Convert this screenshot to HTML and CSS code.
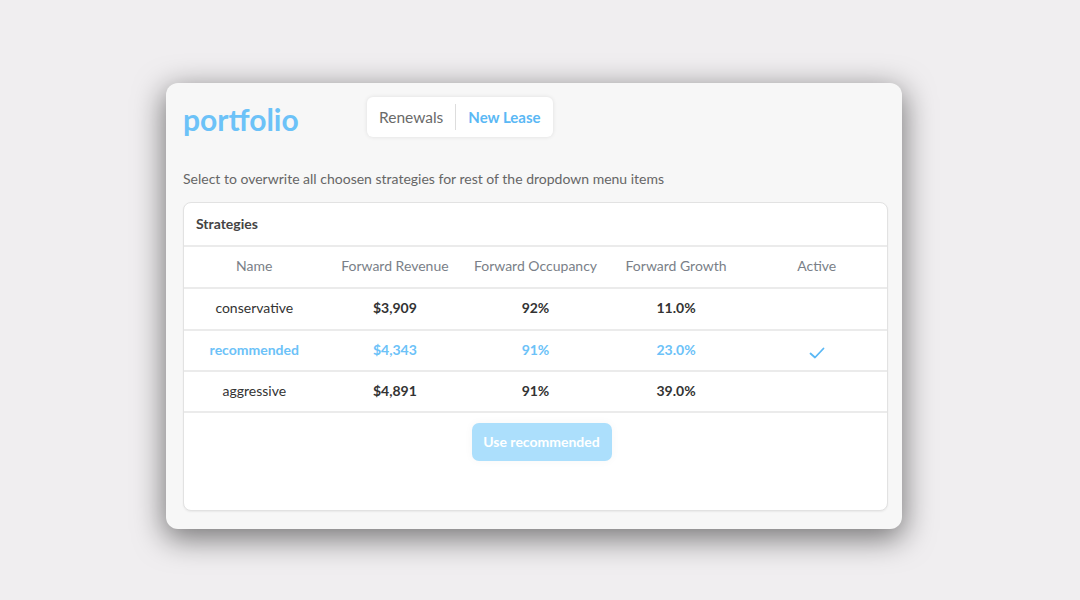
FILE: index.html
```html
<!DOCTYPE html>
<html lang="en">
<head>
    <meta charset="UTF-8">
    <title>portfolio - strategies</title>
    <link rel="stylesheet" href="styles.css">
</head>
<body>
    <div class="panel">
        <div class="top">
            <div class="brand">portfolio</div>
            <div class="tabs">
                <div class="tab">Renewals</div>
                <div class="tab active">New Lease</div>
            </div>
        </div>
        <div class="hint">Select to overwrite all choosen strategies for rest of the dropdown menu items</div>

        <div class="card">
            <div class="card-title">Strategies</div>
            <table>
                <thead>
                <tr>
                    <td>Name</td>
                    <td>Forward Revenue</td>
                    <td>Forward Occupancy</td>
                    <td>Forward Growth</td>
                    <td>Active</td>
                </tr>
                </thead>
                <tbody>
                <tr>
                    <td class="name">conservative</td>
                    <td>$3,909</td>
                    <td>92%</td>
                    <td>11.0%</td>
                    <td></td>
                </tr>
                <tr class="selected">
                    <td class="name">recommended</td>
                    <td>$4,343</td>
                    <td>91%</td>
                    <td>23.0%</td>
                    <td>
                        <svg class="check" width="16" height="12" viewBox="0 0 16 12">
                            <path d="M1.5 6.5 L6 10.5 L14.5 1.5" fill="none" stroke="#5ab8f5" stroke-width="1.8" stroke-linecap="round" stroke-linejoin="round"/>
                        </svg>
                    </td>
                </tr>
                <tr>
                    <td class="name">aggressive</td>
                    <td>$4,891</td>
                    <td>91%</td>
                    <td>39.0%</td>
                    <td></td>
                </tr>
                </tbody>
            </table>
            <div class="actions">
                <div class="btn">Use recommended</div>
            </div>
        </div>
    </div>
</body>
</html>
```

FILE: styles.css
```css
html, body {
    margin: 0;
    padding: 0;
}
body {
    background-color: #f0eef0;
    font-family: Lato, "Liberation Sans", sans-serif;
    color: #333333;
    padding: 83px 0 0 166px;
    min-height: 600px;
    box-sizing: border-box;
}

.panel {
    width: 736px;
    height: 446px;
    box-sizing: border-box;
    background-color: #f7f7f7;
    border-radius: 12px;
    box-shadow: 0 8px 30px 2px rgba(0,0,0,.5);
    padding: 13px 14px 0 17px;
}

.top {
    display: flex;
    align-items: center;
    height: 42px;
}
.brand {
    font-size: 30px;
    font-weight: 700;
    color: #6cc2f8;
    width: 184px;
    padding-top: 3px;
}
.tabs {
    display: flex;
    align-items: center;
    background-color: #ffffff;
    border-radius: 6px;
    box-shadow: 0 0 4px rgba(0,0,0,.1);
    height: 40px;
    padding: 0 12px;
}
.tab {
    font-size: 15.5px;
    color: #6a6a6a;
    padding: 0 12px 0 0;
    height: 26px;
    line-height: 26px;
}
.tab.active {
    color: #5ab8f5;
    font-weight: 700;
    font-size: 15px;
    border-left: 1px solid #dddddd;
    padding: 0 0 0 12px;
}

.hint {
    margin-top: 33px;
    font-size: 14px;
    color: #666666;
    height: 16px;
    line-height: 16px;
}

.card {
    margin-top: 15px;
    background-color: #ffffff;
    border: 1px solid #e2e2e2;
    border-radius: 8px;
    height: 309px;
    box-sizing: border-box;
    overflow: hidden;
    box-shadow: 0 1px 2px rgba(0,0,0,.06);
}
.card-title {
    height: 44px;
    line-height: 42px;
    padding-left: 12px;
    font-size: 14px;
    font-weight: 700;
    color: #444444;
    border-bottom: 2px solid #ebebeb;
    box-sizing: border-box;
}

table {
    width: 100%;
    border-collapse: collapse;
    table-layout: fixed;
    font-size: 14px;
}
table td {
    text-align: center;
    height: 37px;
    padding: 0 0 3px 0;
    border-bottom: 2px solid #ebebeb;
}
table tbody tr + tr td {
    height: 36px;
}
table thead td {
    color: #7a7f88;
}
table tbody td {
    font-weight: 700;
    color: #333333;
}
table tbody td.name {
    font-weight: 400;
}
table tbody tr.selected td {
    color: #6cc2f8;
}
table tbody tr.selected td.name {
    font-weight: 700;
}
.check {
    vertical-align: middle;
    margin-top: 6px;
}

.actions {
    display: flex;
    justify-content: center;
    padding: 10px 0 0 12px;
}
.btn {
    background-color: #acdffc;
    color: #ffffff;
    font-size: 14px;
    font-weight: 700;
    height: 38px;
    line-height: 37px;
    width: 140px;
    text-align: center;
    border-radius: 7px;
    box-shadow: 0 0 10px rgba(0,0,0,.04);
}
```
